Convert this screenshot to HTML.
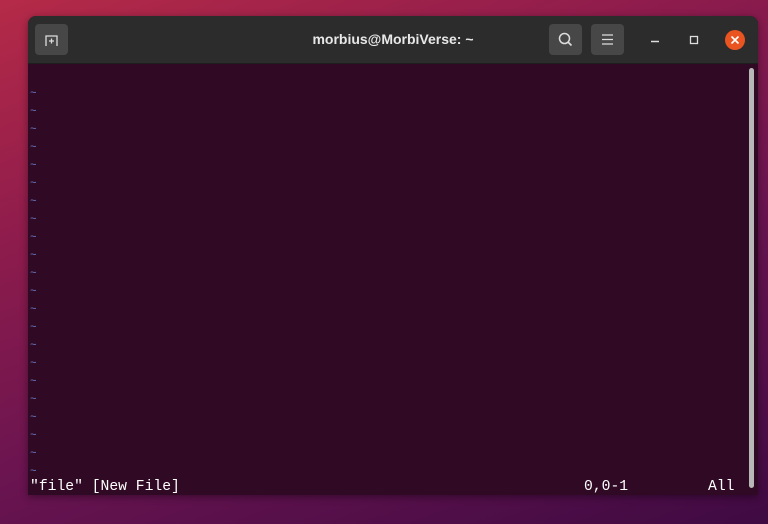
<!DOCTYPE html>
<html><head><style>
body{margin:0;width:768px;height:524px;overflow:hidden;background:linear-gradient(160deg,#b52a48 0%,#8e1c4c 30%,#6a1450 60%,#3f0a42 100%);font-family:"Liberation Sans",sans-serif;position:relative}
.win{position:absolute;left:28px;top:16px;width:730px;height:479px;border-radius:8px 8px 0 0;overflow:hidden;background:#300a24;box-shadow:0 2px 8px rgba(0,0,0,.4)}
.tb{height:47px;background:#2c2c2c;position:relative;border-bottom:1px solid #1e1e1e}
.btn{position:absolute;top:8px;width:33px;height:31px;background:#474747;border-radius:4px}
.title{position:absolute;left:0;right:0;top:15px;text-align:center;color:#e8e8e8;font-weight:bold;font-size:14px}
.term{position:absolute;top:48px;left:0;right:0;bottom:0;font-family:"Liberation Mono",monospace;font-size:14.7px;color:#fff}
.t{position:absolute;left:2px;color:#6c79c8;font-size:11px}
.st{position:absolute;top:415px;white-space:pre}
.sb{position:absolute;right:4px;top:4px;width:5px;height:420px;background:#b8b8b8;border-radius:3px}
</style></head><body>
<div class="win">
<div class="tb">
<div class="btn" style="left:7px"><svg width="33" height="31"><path d="M11 22V12h11v10" fill="none" stroke="#ddd" stroke-width="1.3"/><path d="M16.5 14.5v5M14 17h5" stroke="#ddd" stroke-width="1.3"/></svg></div>
<div class="title">morbius@MorbiVerse: ~</div>
<div class="btn" style="left:521px"><svg width="33" height="31"><circle cx="15.5" cy="14.5" r="5" fill="none" stroke="#ddd" stroke-width="1.5"/><path d="M19 18l3.5 3.5" stroke="#ddd" stroke-width="1.6"/></svg></div>
<div class="btn" style="left:563px"><svg width="33" height="31"><path d="M11 11h11M11 15.5h11M11 20h11" stroke="#ddd" stroke-width="1.3"/></svg></div>
<svg style="position:absolute;left:618px;top:15px" width="20" height="20"><path d="M5 10.5h8" stroke="#ddd" stroke-width="1.4"/></svg>
<svg style="position:absolute;left:658px;top:15px" width="20" height="20"><rect x="4.5" y="5.5" width="7" height="7" fill="none" stroke="#ddd" stroke-width="1.3"/></svg>
<svg style="position:absolute;left:696px;top:13px" width="22" height="22"><circle cx="11" cy="11" r="10" fill="#e95420"/><path d="M7.5 7.5l7 7M14.5 7.5l-7 7" stroke="#fff" stroke-width="1.6"/></svg>
</div>
<div class="term">
<div class="t" style="top:24px">~</div><div class="t" style="top:42px">~</div><div class="t" style="top:60px">~</div><div class="t" style="top:78px">~</div><div class="t" style="top:96px">~</div><div class="t" style="top:114px">~</div><div class="t" style="top:132px">~</div><div class="t" style="top:150px">~</div><div class="t" style="top:168px">~</div><div class="t" style="top:186px">~</div><div class="t" style="top:204px">~</div><div class="t" style="top:222px">~</div><div class="t" style="top:240px">~</div><div class="t" style="top:258px">~</div><div class="t" style="top:276px">~</div><div class="t" style="top:294px">~</div><div class="t" style="top:312px">~</div><div class="t" style="top:330px">~</div><div class="t" style="top:348px">~</div><div class="t" style="top:366px">~</div><div class="t" style="top:384px">~</div><div class="t" style="top:402px">~</div>
<div class="st" style="left:2px">"file" [New File]</div>
<div class="st" style="left:556px">0,0-1</div>
<div class="st" style="left:680px">All</div>
<div class="sb"></div>
</div>
</div>
</body></html>
